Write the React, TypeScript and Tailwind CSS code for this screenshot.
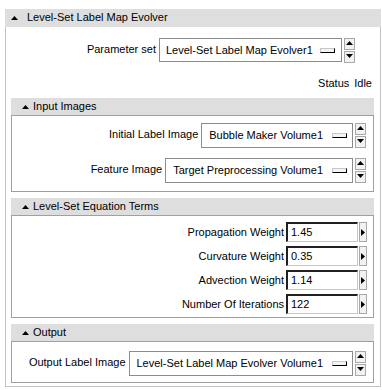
import React from "react";

function UpTri() {
  return (
    <svg width="7" height="4" viewBox="0 0 7 4" className="shrink-0">
      <polygon points="0,4 3.5,0 7,4" fill="#000" />
    </svg>
  );
}

function Indicator() {
  return (
    <div className="w-[15px] h-[5px] shrink-0 bg-[#f4f4f4] border border-t-[#c8c8c8] border-l-[#c8c8c8] border-r-black border-b-black" />
  );
}

function Spin() {
  return (
    <div className="flex flex-col justify-between h-[25px] w-[11px] ml-[2px]">
      <div className="h-[12px] border border-[#a8a8a8] bg-[#f2f2f2] flex items-start justify-center pt-[2px]">
        <svg width="7" height="4" viewBox="0 0 7 4">
          <polygon points="0,4 3.5,0 7,4" fill="#000" />
        </svg>
      </div>
      <div className="h-[12px] border border-[#a8a8a8] bg-[#f2f2f2] flex items-start justify-center pt-[2px]">
        <svg width="7" height="4" viewBox="0 0 7 4">
          <polygon points="0,0 3.5,4 7,0" fill="#000" />
        </svg>
      </div>
    </div>
  );
}

function Combo({ label, value }: { label: string; value: string }) {
  return (
    <div className="flex items-center justify-end h-[25px]">
      <span className="mr-[3px] -mt-[2px]">{label}</span>
      <div className="h-[25px] flex items-center gap-[9px] pl-[7px] pr-[5px] bg-white border border-[#8c8c8c]">
        <span>{value}</span>
        <Indicator />
      </div>
      <Spin />
    </div>
  );
}

function NumField({ label, value }: { label: string; value: string }) {
  return (
    <div className="flex items-center justify-end h-[20px]">
      <span className="mr-[2px]">{label}</span>
      <div className="w-[72px] h-[20px] flex items-center pl-[3px] bg-white border border-t-[2px] border-l-[2px] border-t-[#202020] border-l-[#202020] border-r-[#c8c8c8] border-b-[#c8c8c8]">
        {value}
      </div>
      <div className="w-[8px] h-[20px] ml-[1px] border border-[#a8a8a8] bg-[#f2f2f2] flex items-center justify-center">
        <svg width="4" height="7" viewBox="0 0 4 7">
          <polygon points="0,0 4,3.5 0,7" fill="#000" />
        </svg>
      </div>
    </div>
  );
}

function Section({
  title,
  className,
  bodyClass,
  children,
}: {
  title: string;
  className: string;
  bodyClass: string;
  children: React.ReactNode;
}) {
  return (
    <div className={className}>
      <div className="h-[17px] bg-[#dedede] flex items-center pl-[11px] gap-[4px]">
        <UpTri />
        <span className="-mt-[1px]">{title}</span>
      </div>
      <div className={"border border-[#a0a0a0] " + bodyClass}>{children}</div>
    </div>
  );
}

export default function App() {
  return (
    <div className="w-[382px] h-[390px] bg-white pt-[9px] pl-[5px] font-['Liberation_Sans',Arial,sans-serif] text-[11px] text-black leading-none">
      <div className="w-[376px] flex flex-col">
        <div className="h-[18px] bg-[#dedede] flex items-center pl-[6px] gap-[9px]">
          <UpTri />
          <span className="-mt-[1px]">Level-Set Label Map Evolver</span>
        </div>
        <div className="border-l border-r border-b border-[#c4c4c4] pl-[5px] pr-[6px] pb-[3px]">
          <div className="mt-[11px] pr-[19px] flex items-center justify-end h-[24px]">
            <span className="mr-[3px] -mt-[2px]">Parameter set</span>
            <div className="h-[24px] w-[183px] flex items-center justify-between pl-[6px] pr-[6px] bg-white border border-[#8c8c8c]">
              <span>Level-Set Label Map Evolver1</span>
              <Indicator />
            </div>
            <Spin />
          </div>
          <div className="mt-[14px] h-[14px] flex items-center justify-end gap-[5px] pr-[2px]">
            <span>Status</span>
            <span>Idle</span>
          </div>

          <Section title="Input Images" className="mt-[8px]" bodyClass="pt-[7px] pb-[8px] pr-[7px] flex flex-col gap-[10px]">
            <Combo label="Initial Label Image" value="Bubble Maker Volume1" />
            <Combo label="Feature Image" value="Target Preprocessing Volume1" />
          </Section>

          <Section title="Level-Set Equation Terms" className="mt-[6px]" bodyClass="pt-[6px] pb-[3px] pr-[6px] flex flex-col gap-[4px]">
            <NumField label="Propagation Weight" value="1.45" />
            <NumField label="Curvature Weight" value="0.35" />
            <NumField label="Advection Weight" value="1.14" />
            <NumField label="Number Of Iterations" value="122" />
          </Section>

          <Section title="Output" className="mt-[6px]" bodyClass="pt-[9px] pb-[6px] pr-[7px]">
            <Combo label="Output Label Image" value="Level-Set Label Map Evolver Volume1" />
          </Section>
        </div>
      </div>
    </div>
  );
}
